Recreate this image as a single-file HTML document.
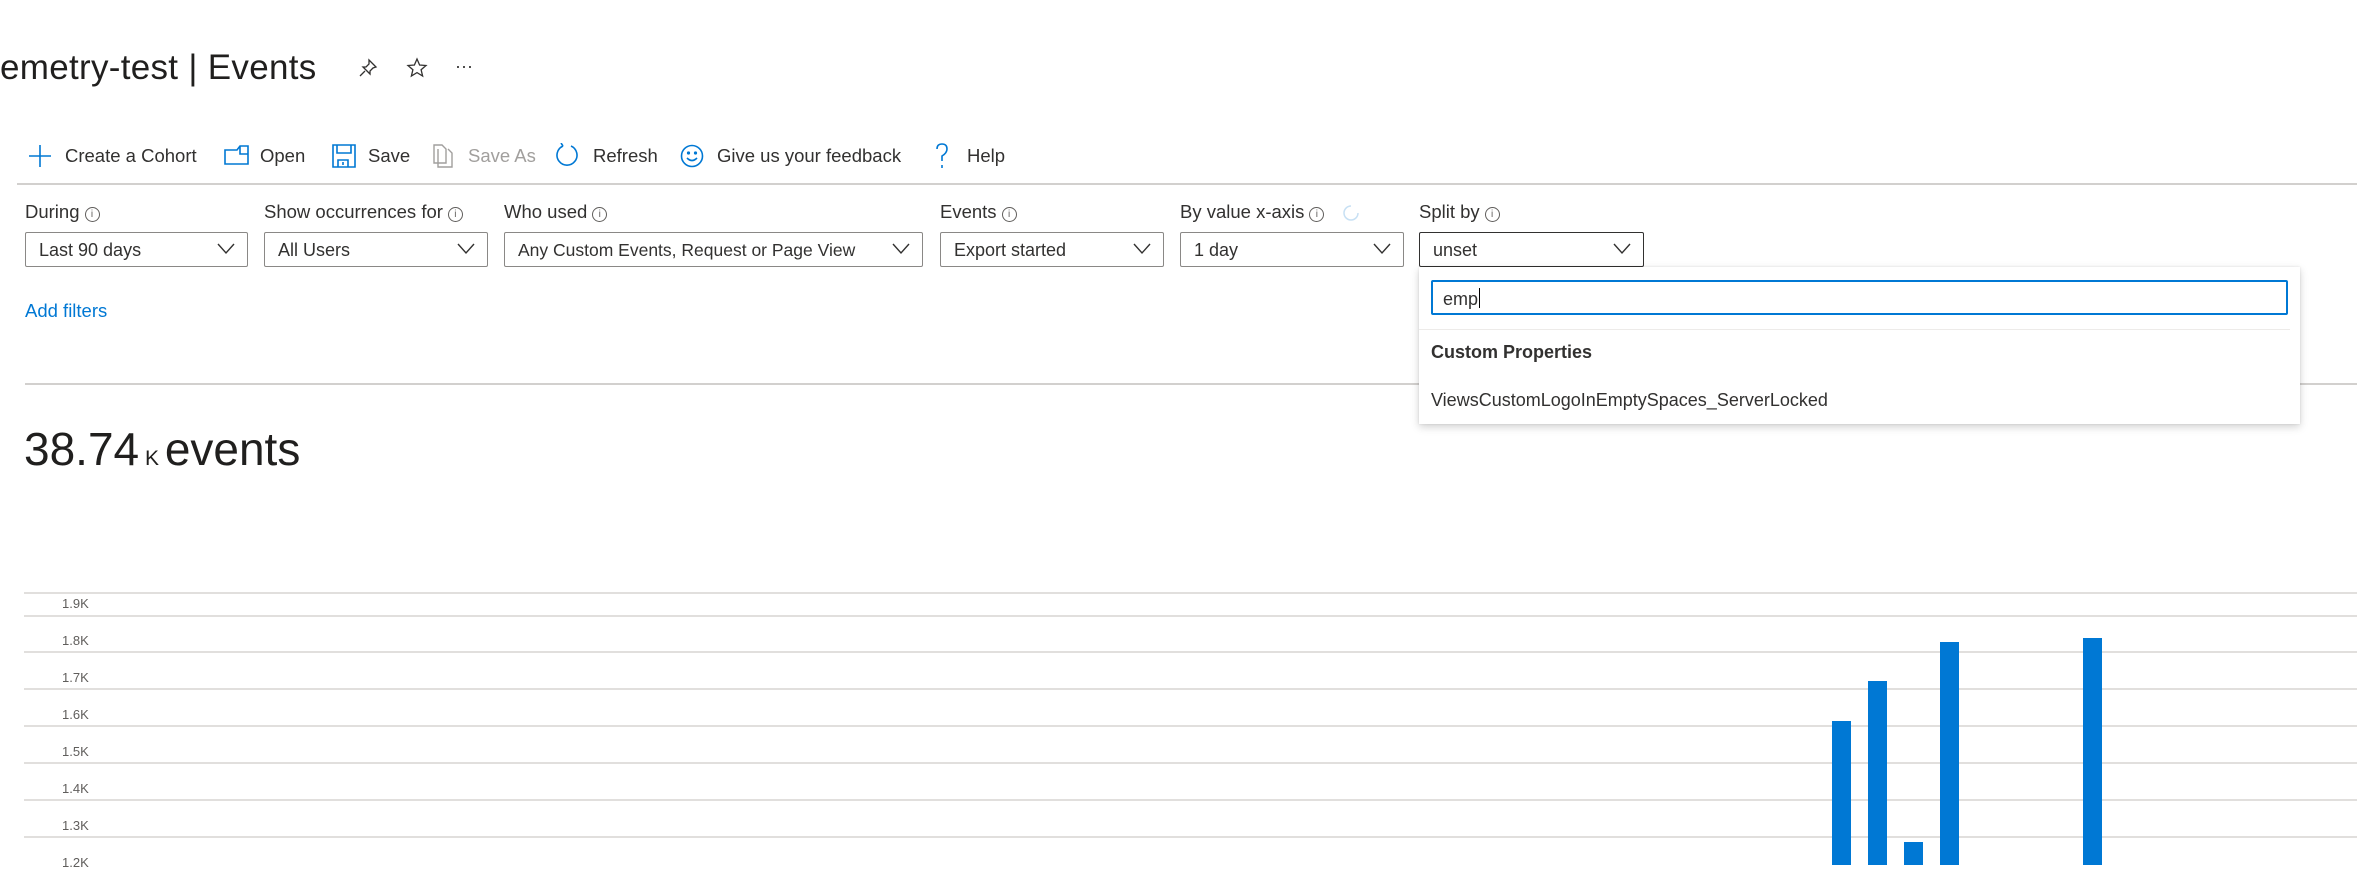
<!DOCTYPE html>
<html><head><meta charset="utf-8"><style>
*{margin:0;padding:0;box-sizing:border-box}
body{width:2357px;height:865px;overflow:hidden;background:#fff;font-family:"Liberation Sans",sans-serif;color:#323130;position:relative}
.a{position:absolute;white-space:nowrap}
.tb{font-size:18.5px;top:145px;color:#323130}
.lbl{font-size:18.5px;top:201px;color:#323130}
.dd{position:absolute;top:232px;height:35px;border:1.5px solid #8a8886;border-radius:2px;font-size:18px;padding:7px 0 0 13px}
.dd svg{position:absolute;right:12px;top:10px}
.info{display:inline-block;width:15px;height:15px;border:1.3px solid #605e5c;border-radius:50%;font-size:10px;text-align:center;line-height:13px;vertical-align:1px;margin-left:5px;color:#605e5c}
.g{position:absolute;left:24px;right:0;height:1.5px;background:#e1dfdd}
.yl{position:absolute;left:62px;font-size:13px;color:#605e5c}
.bar{position:absolute;background:#0078d4;width:19px;bottom:0}
</style></head><body>
<div class="a" style="left:0;top:48px;font-size:35px;color:#201f1e;letter-spacing:0.3px">emetry-test <span style="font-weight:300">|</span> Events</div>
<svg class="a" style="left:358px;top:58px" width="20" height="20" viewBox="0 0 20 20" fill="none" stroke="#323130" stroke-width="1.3"><path d="M11 2l7 7-3 1-3 3 0 3-7-7 3 0 3-3z M7 13l-5 5"/></svg>
<svg class="a" style="left:406px;top:57px" width="22" height="22" viewBox="0 0 22 22" fill="none" stroke="#323130" stroke-width="1.3"><path d="M11 2l2.6 6 6.4.5-4.9 4.2 1.5 6.3L11 15.6 5.4 19l1.5-6.3L2 8.5 8.4 8z"/></svg>
<div class="a" style="left:455px;top:56px;font-size:18px">···</div>

<svg class="a" style="left:29px;top:145px" width="22" height="22" viewBox="0 0 22 22" stroke="#0078d4" stroke-width="1.6"><path d="M11 0v22M0 11h22"/></svg>
<div class="a tb" style="left:65px">Create a Cohort</div>
<svg class="a" style="left:224px;top:145px" width="25" height="20" viewBox="0 0 25 20" fill="none" stroke="#0078d4" stroke-width="1.6"><path d="M1 5h12l3-4h8v18H1z M16 1v8h8"/></svg>
<div class="a tb" style="left:260px">Open</div>
<svg class="a" style="left:332px;top:144px" width="24" height="24" viewBox="0 0 24 24" fill="none" stroke="#0078d4" stroke-width="1.6"><path d="M1 1h22v22H1z M5 1v8h14V1 M6 23v-7h10v7 M11 18v3"/></svg>
<div class="a tb" style="left:368px">Save</div>
<svg class="a" style="left:433px;top:144px" width="20" height="24" viewBox="0 0 20 24" fill="none" stroke="#a19f9d" stroke-width="1.4"><path d="M1 1h8l4 4v14H1z M5 5v18h14V9l-4-4"/></svg>
<div class="a tb" style="left:468px;color:#a19f9d">Save As</div>
<svg class="a" style="left:556px;top:143px" width="24" height="26" viewBox="0 0 24 26" fill="none" stroke="#0078d4" stroke-width="1.6"><path d="M7 3A10 10 0 1 0 15 3 M7 3L5 0 M7 3L4 5"/></svg>
<div class="a tb" style="left:593px">Refresh</div>
<svg class="a" style="left:680px;top:144px" width="24" height="24" viewBox="0 0 24 24" fill="none" stroke="#0078d4" stroke-width="1.6"><circle cx="12" cy="12" r="10.5"/><circle cx="8.5" cy="9" r=".8" fill="#0078d4"/><circle cx="15.5" cy="9" r=".8" fill="#0078d4"/><path d="M7 14q5 5 10 0"/></svg>
<div class="a tb" style="left:717px">Give us your feedback</div>
<svg class="a" style="left:934px;top:143px" width="16" height="26" viewBox="0 0 16 26" fill="none" stroke="#0078d4" stroke-width="1.6"><path d="M3 6q0-5 5-5t5 5q0 4-5 7v5 M8 22v3"/></svg>
<div class="a tb" style="left:967px">Help</div>
<div class="a" style="left:17px;right:0;top:183px;height:1.5px;background:#d2d0ce"></div>

<div class="a lbl" style="left:25px">During<span class="info">i</span></div>
<div class="a lbl" style="left:264px">Show occurrences for<span class="info">i</span></div>
<div class="a lbl" style="left:504px">Who used<span class="info">i</span></div>
<div class="a lbl" style="left:940px">Events<span class="info">i</span></div>
<div class="a lbl" style="left:1180px">By value x-axis<span class="info">i</span></div>
<svg class="a" style="left:1343px;top:205px" width="16" height="16" viewBox="0 0 16 16" fill="none" stroke="#c7e0f4" stroke-width="1.5"><path d="M8 1a7 7 0 1 0 7 7"/></svg>
<div class="a lbl" style="left:1419px">Split by<span class="info">i</span></div>

<div class="dd" style="left:25px;width:223px">Last 90 days<svg width="18" height="12" viewBox="0 0 18 12" fill="none" stroke="#323130" stroke-width="1.4"><path d="M1 1l8 9 8-9"/></svg></div>
<div class="dd" style="left:264px;width:224px">All Users<svg width="18" height="12" viewBox="0 0 18 12" fill="none" stroke="#323130" stroke-width="1.4"><path d="M1 1l8 9 8-9"/></svg></div>
<div class="dd" style="left:504px;width:419px;font-size:17.5px">Any Custom Events, Request or Page View<svg width="18" height="12" viewBox="0 0 18 12" fill="none" stroke="#323130" stroke-width="1.4"><path d="M1 1l8 9 8-9"/></svg></div>
<div class="dd" style="left:940px;width:224px">Export started<svg width="18" height="12" viewBox="0 0 18 12" fill="none" stroke="#323130" stroke-width="1.4"><path d="M1 1l8 9 8-9"/></svg></div>
<div class="dd" style="left:1180px;width:224px">1 day<svg width="18" height="12" viewBox="0 0 18 12" fill="none" stroke="#323130" stroke-width="1.4"><path d="M1 1l8 9 8-9"/></svg></div>
<div class="dd" style="left:1419px;width:225px;border-color:#323130">unset<svg width="18" height="12" viewBox="0 0 18 12" fill="none" stroke="#323130" stroke-width="1.4"><path d="M1 1l8 9 8-9"/></svg></div>

<div class="a" style="left:25px;top:300px;font-size:18.5px;color:#0078d4">Add filters</div>
<div class="a" style="left:25px;right:0;top:383px;height:2px;background:#d2d0ce"></div>

<div class="a" style="left:24px;top:422px;font-size:46px;color:#201f1e">38.74<span style="font-size:21px"> K </span> events</div>

<div class="g" style="top:592px"></div>
<div class="g" style="top:615px"></div>
<div class="g" style="top:651px"></div>
<div class="g" style="top:688px"></div>
<div class="g" style="top:725px"></div>
<div class="g" style="top:762px"></div>
<div class="g" style="top:799px"></div>
<div class="g" style="top:836px"></div>
<div class="yl" style="top:596px">1.9K</div>
<div class="yl" style="top:633px">1.8K</div>
<div class="yl" style="top:670px">1.7K</div>
<div class="yl" style="top:707px">1.6K</div>
<div class="yl" style="top:744px">1.5K</div>
<div class="yl" style="top:781px">1.4K</div>
<div class="yl" style="top:818px">1.3K</div>
<div class="yl" style="top:855px">1.2K</div>
<div class="bar" style="left:1832px;top:721px"></div>
<div class="bar" style="left:1868px;top:681px"></div>
<div class="bar" style="left:1904px;top:842px"></div>
<div class="bar" style="left:1940px;top:642px"></div>
<div class="bar" style="left:2083px;top:638px"></div>

<div class="a" style="left:1419px;top:267px;width:881px;height:157px;background:#fff;box-shadow:0 3px 8px rgba(0,0,0,.18),0 0 2px rgba(0,0,0,.1)">
 <div class="a" style="left:12px;top:13px;width:857px;height:35px;border:2px solid #0078d4;border-radius:2px;font-size:18px;padding:6px 0 0 10px">emp<span style="border-left:1.5px solid #000;margin-left:1px;height:20px;display:inline-block;vertical-align:-3px"></span></div>
 <div class="a" style="left:0;right:10px;top:62px;height:1px;background:#edebe9"></div>
 <div class="a" style="left:12px;top:75px;font-size:18px;font-weight:bold;color:#323130">Custom Properties</div>
 <div class="a" style="left:12px;top:123px;font-size:18px;color:#323130">ViewsCustomLogoInEmptySpaces_ServerLocked</div>
</div>
</body></html>
